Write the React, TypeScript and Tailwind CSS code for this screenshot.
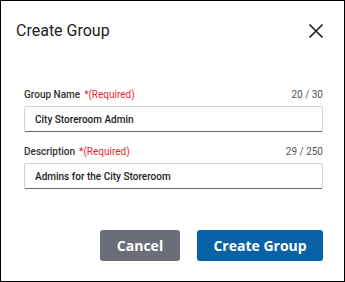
type FieldProps = {
  label: string;
  value: string;
  max: number;
};

function Field({ label, value, max }: FieldProps) {
  return (
    <div className="flex flex-col">
      <div className="flex h-[14px] items-center justify-between text-[10px] leading-[14px]">
        <div className="flex items-center">
          <span className="font-medium text-[#333]">{label}</span>
          <span className="ml-[4px] text-[#e3262f]">*(Required)</span>
        </div>
        <span className="text-[#555]">
          {value.length} / {max}
        </span>
      </div>
      <input
        readOnly
        value={value}
        className="mt-[4px] h-[26px] w-full rounded-[2px] border border-[#d4d4d4] border-b-[#666] px-[10px] text-[10px] font-medium text-[#222] outline-none"
      />
    </div>
  );
}

export default function App() {
  return (
    <div
      className="flex h-[282px] w-[345px] flex-col border border-black bg-white"
      style={{ fontFamily: "Roboto, 'Liberation Sans', sans-serif" }}
    >
      {/* Header */}
      <header className="flex h-[60px] items-center justify-between pl-[15px] pr-[21px]">
        <h1 className="text-[16px] leading-[22px] text-[#222]">Create Group</h1>
        <svg width="14" height="14" viewBox="0 0 14 14" className="text-[#222]">
          <path d="M1 1L13 13M13 1L1 13" stroke="currentColor" strokeWidth="1.7" strokeLinecap="round" />
        </svg>
      </header>

      {/* Formulario */}
      <div className="mt-[27px] flex flex-col gap-[13px] pl-[23px] pr-[21px]">
        <Field label="Group Name" value="City Storeroom Admin" max={30} />
        <Field label="Description" value="Admins for the City Storeroom" max={250} />
      </div>

      {/* Acciones */}
      <div
        className="mt-[41px] flex justify-end gap-[17px] pr-[21px]"
        style={{ fontFamily: "'Open Sans', sans-serif" }}
      >
        <button className="h-[31px] w-[80px] rounded-[3px] bg-[#6b6e78] text-[14px] font-bold text-white">
          Cancel
        </button>
        <button className="h-[31px] w-[126px] rounded-[3px] bg-[#0862a5] text-[14px] font-bold text-white">
          Create Group
        </button>
      </div>
    </div>
  );
}
